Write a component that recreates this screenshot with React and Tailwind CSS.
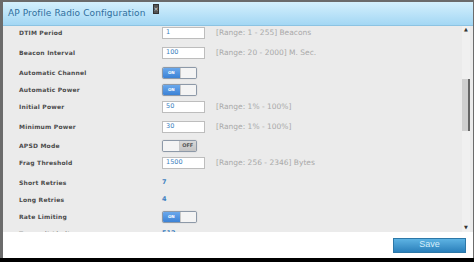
import React from "react";

const rows = [
  { label: "DTIM Period", type: "input", value: "1", note: "[Range: 1 - 255] Beacons", h: "h-[20px]" },
  { label: "Beacon Interval", type: "input", value: "100", note: "[Range: 20 - 2000] M. Sec.", h: "h-[20px]" },
  { label: "Automatic Channel", type: "on", h: "h-[17px]" },
  { label: "Automatic Power", type: "on", h: "h-[17px]" },
  { label: "Initial Power", type: "input", value: "50", note: "[Range: 1% - 100%]", h: "h-[20px]" },
  { label: "Minimum Power", type: "input", value: "30", note: "[Range: 1% - 100%]", h: "h-[19px]" },
  { label: "APSD Mode", type: "off", h: "h-[17px]" },
  { label: "Frag Threshold", type: "input", value: "1500", note: "[Range: 256 - 2346] Bytes", h: "h-[20px]" },
  { label: "Short Retries", type: "text", value: "7", h: "h-[17px]" },
  { label: "Long Retries", type: "text", value: "4", h: "h-[17px]" },
  { label: "Rate Limiting", type: "on", h: "h-[17px]" },
  { label: "Transmit Limit", type: "text", value: "512", h: "h-[17px]" },
];

const Toggle = ({ on }) => (
  <div className="flex w-[35px] h-[12px] rounded-[2px] border border-[#8d99a8] overflow-hidden shadow-[0_0_1px_rgba(0,0,0,0.3)]">
    {on ? (
      <>
        <div className="w-1/2 bg-gradient-to-b from-[#6aa8ec] to-[#3b82d6] text-[4px] text-white flex items-center justify-center font-bold">ON</div>
        <div className="w-1/2 bg-[#f4f4f4] border-l border-[#c8c8c8]"></div>
      </>
    ) : (
      <>
        <div className="w-1/2 bg-[#f4f4f4] border-r border-[#c8c8c8]"></div>
        <div className="w-1/2 bg-gradient-to-b from-[#d8d8d8] to-[#c4c4c4] text-[5px] text-[#555] flex items-center justify-center font-bold">OFF</div>
      </>
    )}
  </div>
);

const App = () => {
  return (
    <div className="w-[474px] h-[262px] bg-black overflow-hidden" style={{ fontFamily: '"DejaVu Sans", Verdana, sans-serif' }}>
      <div className="h-[258px] bg-[#6b6b6b] pl-[3px] pt-[2px] pr-[1px] flex flex-col">
        <div className="h-[24px] shrink-0 bg-gradient-to-b from-[#d4f0fd] to-[#a3d7f4] border-b border-[#8cc3e2] flex items-center pl-[5px] relative">
          <span className="text-[9px] text-[#2f6f9e] tracking-[0.1px]">AP Profile Radio Configuration</span>
          <div className="absolute left-[150px] top-[2px] w-[6px] h-[10px] bg-[#555] border border-[#333] flex items-center justify-center">
            <span className="text-[6px] leading-none text-[#ddd]">×</span>
          </div>
        </div>
        <div className="flex-1 flex bg-[#ebebeb] overflow-hidden">
          <div className="flex-1 overflow-hidden">
            {rows.map((r, i) => (
              <div key={i} className={`${r.h} flex items-start`}>
                <div className="h-[13px] flex items-center w-full">
                  <div className="w-[159px] shrink-0 pl-[16px] text-[6px] font-bold text-[#4b4b4b] tracking-[0.2px]">{r.label}</div>
                  {r.type === "input" && (
                    <>
                      <div className="w-[43px] h-[12px] bg-white border border-[#bdbdbd] text-[6.5px] text-[#3c7fc0] pl-[3px] flex items-center">{r.value}</div>
                      <div className="pl-[11px] text-[7.5px] text-[#a9a9a9]">{r.note}</div>
                    </>
                  )}
                  {r.type === "on" && <Toggle on />}
                  {r.type === "off" && <Toggle />}
                  {r.type === "text" && <div className="text-[6.5px] font-bold text-[#3c7fc0]">{r.value}</div>}
                </div>
              </div>
            ))}
          </div>
          <div className="w-[8px] mr-[3px] bg-[#f0f0f0] flex flex-col">
            <div className="h-[8px] flex items-center justify-center text-[5px] text-[#333]">▲</div>
            <div className="h-[45px]"></div>
            <div className="h-[52px] bg-[#cfcfcf] border-r-2 border-[#666]"></div>
            <div className="flex-1"></div>
            <div className="h-[8px] flex items-center justify-center text-[5px] text-[#333]">▼</div>
          </div>
        </div>
        <div className="h-[26px] shrink-0 bg-white flex items-center justify-end pr-[7px]">
          <div className="w-[73px] h-[15px] bg-gradient-to-b from-[#5db3e3] to-[#2a80bb] border border-[#2d78a8] flex items-center justify-center text-[9px] text-[#d6eefa]" style={{ fontFamily: '"Liberation Sans", Arial, sans-serif' }}>Save</div>
        </div>
      </div>
    </div>
  );
};

export default App;
